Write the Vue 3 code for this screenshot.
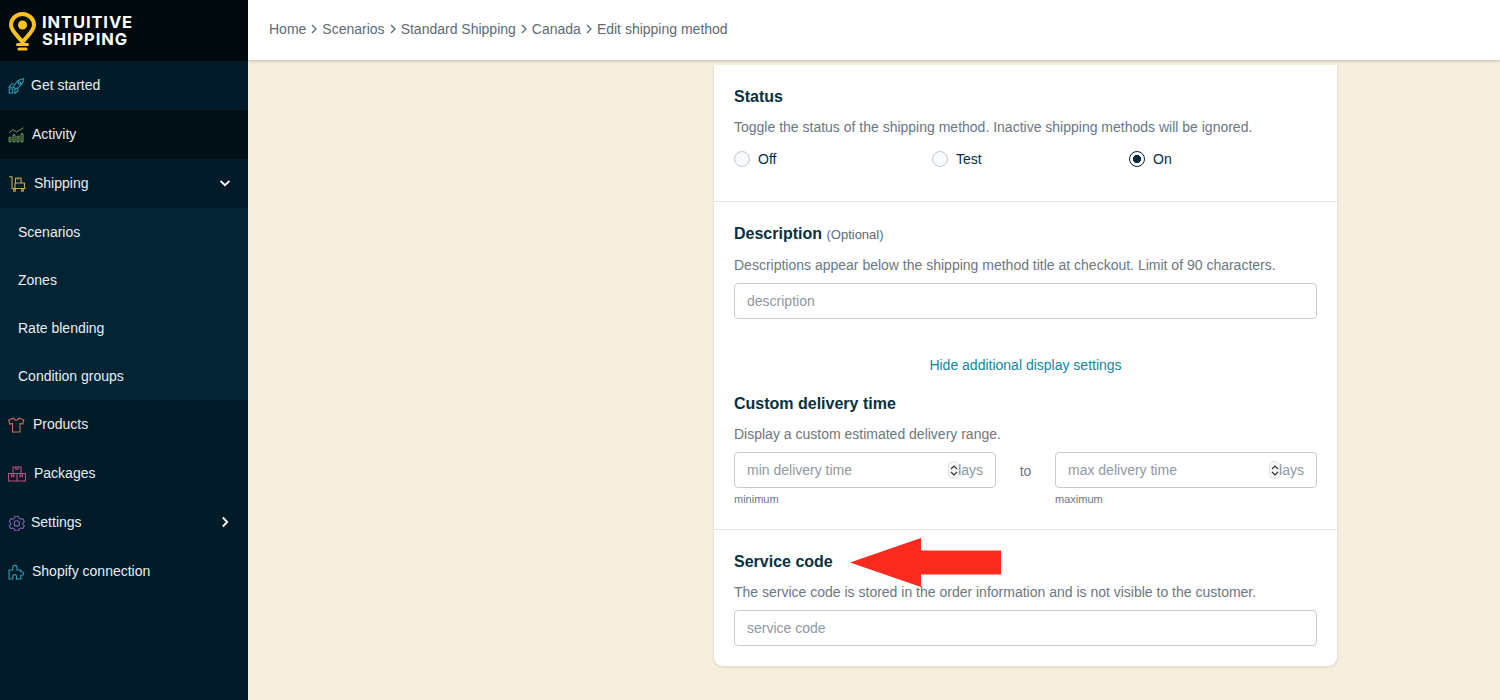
<script setup>
const navTop = [
  { label: 'Get started', icon: 'rocket', color: '#2f9fb5', gap: 5, dark: false },
  { label: 'Activity', icon: 'chart', color: '#6f9a5a', gap: 6, dark: true },
  { label: 'Shipping', icon: 'cart', color: '#c9a84a', gap: 8, chevron: 'down', dark: false }
]
const subItems = ['Scenarios', 'Zones', 'Rate blending', 'Condition groups']
const navBottom = [
  { label: 'Products', icon: 'shirt', color: '#c8705a', gap: 7 },
  { label: 'Packages', icon: 'boxes', color: '#b9527c', gap: 8 },
  { label: 'Settings', icon: 'gear', color: '#8660b0', gap: 5, chevron: 'right' },
  { label: 'Shopify connection', icon: 'puzzle', color: '#2f9fb5', gap: 6 }
]
const crumbs = ['Home', 'Scenarios', 'Standard Shipping', 'Canada', 'Edit shipping method']
const statuses = ['Off', 'Test', 'On']
</script>

<template>
  <div class="app">
    <aside class="sidebar">
      <div class="brand">
        <svg class="bulb" width="30" height="40" viewBox="0 0 30 40">
          <path d="M14.500 3C8 3 3 8 3 14c0 6 7 11 11.500 17C19 25 26 20 26 14 26 8 21 3 14.500 3z" fill="none" stroke="#fcc419" stroke-width="4" stroke-linejoin="round" />
          <circle cx="14.500" cy="14" r="4.500" fill="#fcc419" />
          <path d="M9.500 33.500h10M11 38h7" stroke="#fcc419" stroke-width="3" stroke-linecap="round" />
        </svg>
        <div class="brand-name">INTUITIVE<br />SHIPPING</div>
      </div>
      <a v-for="item in navTop" :key="item.label" class="nav-item" :class="{ 'nav-dark': item.dark }" :style="{ gap: item.gap + 'px' }">
        <svg class="nav-icon" width="18" height="16" viewBox="0 0 18 16" fill="none" :stroke="item.color" stroke-width="1.100">
          <template v-if="item.icon === 'rocket'">
            <path d="M5.500 9C7.500 4 10.500 1.300 15.500.700 15.200 5.300 12.500 8.500 7.500 11z" />
            <circle cx="11.300" cy="5" r="1.300" />
            <path d="M6 6H3.300L1 9.200h3.800M9.800 10v3l-3 2.400v-3.800M1.200 11h3.500v4H1.200z" />
          </template>
          <template v-else-if="item.icon === 'chart'">
            <path d="M1 6 4.800 2.500 8.500 5l7-4.200" stroke-width="1" />
            <rect x="1" y="10" width="2" height="5" rx="1" />
            <rect x="5" y="7.500" width="2" height="7.500" rx="1" />
            <rect x="9" y="9" width="2" height="6" rx="1" />
            <rect x="13" y="6.500" width="2" height="8.500" rx="1" />
          </template>
          <template v-else>
            <path d="M1 .800h3v11.700h13.500" />
            <path d="M7 7h9.500v5.500M7 7v5.500M7.500 2h5.500v5M7.500 2v5M10 2v2" />
            <circle cx="6.500" cy="14.300" r="1.100" />
            <circle cx="14.500" cy="14.300" r="1.100" />
          </template>
        </svg>
        <span class="nav-label">{{ item.label }}</span>
        <svg v-if="item.chevron" class="chevron" width="12" height="12" viewBox="0 0 12 12" fill="none" stroke="#fff" stroke-width="1.800">
          <path d="M1.500 3.800 6 8.200l4.500-4.400" />
        </svg>
      </a>
      <div class="subnav">
        <a v-for="sub in subItems" :key="sub" class="sub-item">{{ sub }}</a>
      </div>
      <a v-for="item in navBottom" :key="item.label" class="nav-item" :style="{ gap: item.gap + 'px' }">
        <svg class="nav-icon" width="18" height="16" viewBox="0 0 18 16" fill="none" :stroke="item.color" stroke-width="1.100">
          <template v-if="item.icon === 'shirt'">
            <path d="M5.500 1 .700 3l1 4 2.800-.6V15h7.500V6.400l2.800.6 1-4L11 1c-.5 1.500-1.400 2.200-2.700 2.200S6 2.500 5.500 1z" />
          </template>
          <template v-else-if="item.icon === 'boxes'">
            <path d="M5 1h8v6.500H5zM.500 7.500h8.500V15H.500zM9 7.500h8.500V15H9z" />
            <path d="M7.800 1v2.300h2.400V1M3.500 7.500v3l1.200-.7 1.200.7v-3M12 7.500v3l1.200-.7 1.200.7v-3" />
          </template>
          <template v-else-if="item.icon === 'gear'">
            <path d="M6 1.200h3.500l.5 2 1.700 1 2-.6 1.600 2.800-1.400 1.500v1.500l1.400 1.500-1.600 2.700-2-.6-1.700 1-.5 1.800H6l-.5-1.800-1.700-1-2 .6-1.600-2.700 1.400-1.500V7.900L.200 6.400l1.600-2.800 2 .6 1.700-1z" transform="translate(1 0)" />
            <circle cx="8.800" cy="8.400" r="2.700" />
          </template>
          <template v-else>
            <path d="M1 6h3.800V3.500a2.100 2.100 0 0 1 4.200 0V6h3.800v1.800h1a1.700 1.700 0 0 1 0 3.400h-1V15H8.500v-2.500a1.900 1.900 0 0 0-3.800 0V15H1z" />
          </template>
        </svg>
        <span class="nav-label">{{ item.label }}</span>
        <svg v-if="item.chevron" class="chevron" width="12" height="12" viewBox="0 0 12 12" fill="none" stroke="#fff" stroke-width="1.800">
          <path d="M3.800 1.500 8.200 6l-4.400 4.500" />
        </svg>
      </a>
    </aside>

    <div class="main">
      <header class="topbar">
        <template v-for="(crumb, i) in crumbs" :key="crumb">
          <svg v-if="i > 0" class="crumb-sep" width="6" height="10" viewBox="0 0 6 10" fill="none" stroke="#5c6b75" stroke-width="1.300">
            <path d="M1 1l4 4-4 4" />
          </svg>
          <span>{{ crumb }}</span>
        </template>
      </header>

      <div class="content">
        <div class="card">
          <section class="section section-status">
            <h2>Status</h2>
            <p class="help">Toggle the status of the shipping method. Inactive shipping methods will be ignored.</p>
            <div class="radios">
              <label v-for="s in statuses" :key="s" class="radio-row">
                <span class="radio" :class="{ 'radio-on': s === 'On' }"></span>
                {{ s }}
              </label>
            </div>
          </section>

          <section class="section section-desc">
            <h2>Description <small>(Optional)</small></h2>
            <p class="help">Descriptions appear below the shipping method title at checkout. Limit of 90 characters.</p>
            <div class="input"><span class="placeholder">description</span></div>
            <a class="link">Hide additional display settings</a>
            <h2>Custom delivery time</h2>
            <p class="help">Display a custom estimated delivery range.</p>
            <div class="range">
              <div class="range-field">
                <div class="input input-days">
                  <span class="placeholder">min delivery time</span>
                  <span class="unit">days</span>
                  <span class="spinner">
                    <svg width="8" height="13" viewBox="0 0 8 13" fill="none" stroke="#333" stroke-width="1.200"><path d="M1 5l3-3 3 3M1 8l3 3 3-3" /></svg>
                  </span>
                </div>
                <span class="hint">minimum</span>
              </div>
              <span class="range-to">to</span>
              <div class="range-field">
                <div class="input input-days">
                  <span class="placeholder">max delivery time</span>
                  <span class="unit">days</span>
                  <span class="spinner">
                    <svg width="8" height="13" viewBox="0 0 8 13" fill="none" stroke="#333" stroke-width="1.200"><path d="M1 5l3-3 3 3M1 8l3 3 3-3" /></svg>
                  </span>
                </div>
                <span class="hint">maximum</span>
              </div>
            </div>
          </section>

          <section class="section section-code">
            <h2>Service code</h2>
            <p class="help">The service code is stored in the order information and is not visible to the customer.</p>
            <div class="input"><span class="placeholder">service code</span></div>
          </section>
        </div>
      </div>
    </div>

    <!-- annotation drawn over the screenshot -->
    <svg class="arrow" width="152" height="50" viewBox="0 0 152 50">
      <path d="M0 24.500 71 0v12.500h80v24H71V49z" fill="#fb2a1f" />
    </svg>
  </div>
</template>

<style>
html, body {
  margin: 0;
  background: #f7efdd;
}
</style>

<style scoped>
.app {
  position: relative;
  display: flex;
  width: 1500px;
  height: 700px;
  overflow: hidden;
  font-family: "Liberation Sans", Arial, sans-serif;
  background: #f7efdd;
}
.sidebar {
  width: 248px;
  flex-shrink: 0;
  background: #011b29;
  display: flex;
  flex-direction: column;
}
.brand {
  height: 61px;
  flex-shrink: 0;
  background: #00090d;
  display: flex;
  align-items: center;
  gap: 4px;
  padding-left: 8px;
  box-sizing: border-box;
}
.brand-name {
  color: #fff;
  font-family: Inter, sans-serif;
  font-weight: 700;
  font-size: 16.500px;
  line-height: 17px;
  letter-spacing: 0.9px;
}
.nav-item {
  height: 49px;
  flex-shrink: 0;
  display: flex;
  align-items: center;
  padding: 0 17px 0 8px;
  color: #e8eef1;
  font-size: 14px;
  box-sizing: border-box;
}
.nav-dark {
  background: #010f17;
}
.nav-icon {
  flex-shrink: 0;
}
.nav-label {
  flex: 1;
  margin-bottom: 2px;
}
.chevron {
  margin-bottom: 2px;
}
.subnav {
  background: #022435;
  display: flex;
  flex-direction: column;
}
.sub-item {
  height: 48px;
  display: flex;
  align-items: center;
  padding-left: 18px;
  color: #e8eef1;
  font-size: 14px;
}
.main {
  flex: 1;
  display: flex;
  flex-direction: column;
  min-width: 0;
}
.topbar {
  height: 60px;
  flex-shrink: 0;
  background: #fff;
  box-shadow: 0 1px 3px rgba(0, 0, 0, 0.22);
  display: flex;
  align-items: center;
  gap: 5px;
  padding: 0 0 2px 21px;
  color: #5c6b75;
  font-size: 14px;
  position: relative;
  box-sizing: border-box;
}
.content {
  display: flex;
  justify-content: flex-end;
  padding: 5px 162px 0 0;
}
.card {
  width: 625px;
  height: 602px;
  background: #fff;
  border: 1px solid #e6e3d8;
  border-top: none;
  border-radius: 0 0 10px 10px;
  box-shadow: 0 1px 2px rgba(0, 0, 0, 0.08);
  box-sizing: border-box;
  display: flex;
  flex-direction: column;
}
.section {
  padding: 0 20px;
  border-bottom: 1px solid #e2e4e5;
  box-sizing: border-box;
}
.section:last-child {
  border-bottom: none;
}
.section-status {
  height: 137px;
  padding-top: 22px;
}
.section-desc {
  height: 328px;
  padding-top: 22px;
}
.section-code {
  flex: 1;
  padding-top: 22px;
}
h2 {
  margin: 0;
  font-size: 16px;
  line-height: 19px;
  font-weight: 700;
  color: #08303f;
}
h2 small {
  font-size: 13px;
  font-weight: 400;
  color: #5c6b75;
}
.help {
  margin: 13px 0 0;
  font-size: 14px;
  line-height: 17px;
  color: #6b7781;
}
.radios {
  display: grid;
  grid-template-columns: 198px 197px 1fr;
  margin-top: 15px;
}
.radio-row {
  display: flex;
  align-items: center;
  gap: 8px;
  font-size: 14px;
  line-height: 16px;
  color: #08303f;
}
.radio {
  width: 16px;
  height: 16px;
  border: 1px solid #c4cad0;
  border-radius: 50%;
  background: #f8f9fb;
  box-sizing: border-box;
}
.radio-on {
  border: 1.500px solid #04293c;
  background: radial-gradient(circle, #04293c 0, #04293c 3.800px, #fff 4.400px);
}
.input {
  height: 36px;
  margin-top: 9px;
  border: 1px solid #c9ccce;
  border-radius: 4px;
  display: flex;
  align-items: center;
  padding: 0 12px;
  font-size: 14px;
  box-sizing: border-box;
  background: #fff;
}
.input-days {
  position: relative;
}
.placeholder {
  color: #8f99a3;
  flex: 1;
}
.link {
  display: block;
  margin-top: 38px;
  text-align: center;
  font-size: 14px;
  line-height: 17px;
  color: #12879d;
}
.link + h2 {
  margin-top: 20px;
}
.range {
  display: flex;
  margin-top: 9px;
}
.range-field {
  width: 262px;
  display: flex;
  flex-direction: column;
}
.range-field .input {
  margin-top: 0;
}
.range-to {
  flex: 1;
  text-align: center;
  padding-top: 11px;
  font-size: 14px;
  color: #6b7781;
}
/* native number spinner sits on top of the "days" suffix */
.spinner {
  position: absolute;
  right: 36px;
  top: 8px;
  width: 11px;
  height: 18px;
  display: flex;
  align-items: center;
  justify-content: center;
  background: #f6f6f6;
  border-radius: 5px;
  box-shadow: inset 0 0 0 1px #e4e4e4;
}
.unit {
  color: #8f99a3;
}
.hint {
  margin-top: 5px;
  font-size: 11px;
  line-height: 13px;
  color: #6b7781;
}
.arrow {
  position: absolute;
  left: 850px;
  top: 538px;
}
</style>
